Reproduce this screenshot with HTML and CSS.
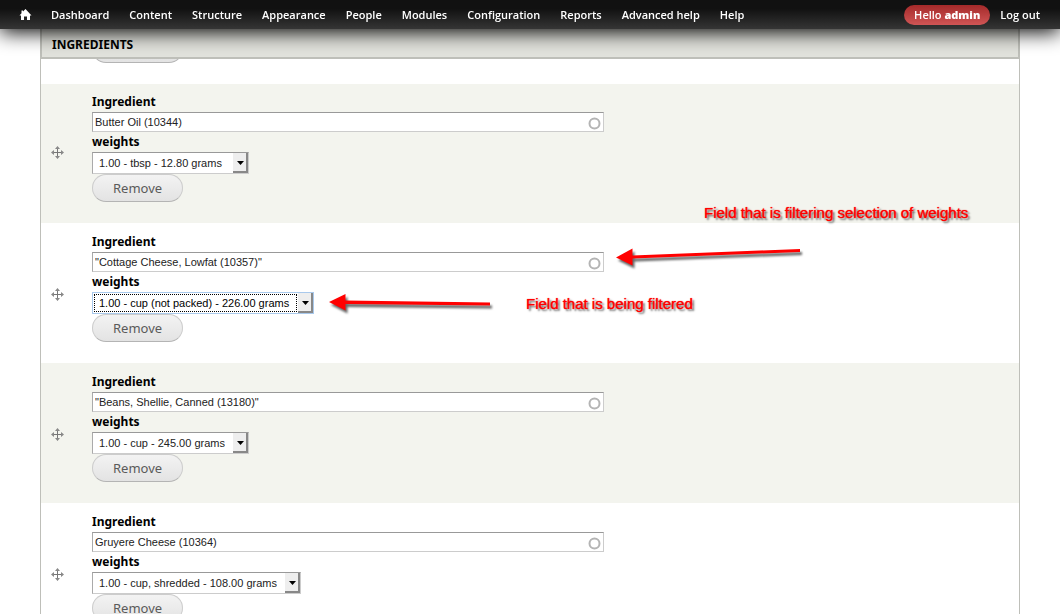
FILE: index.html
```
<!DOCTYPE html>
<html lang="en">
  <head>
    <meta charset="utf-8" />
    <title>Edit recipe</title>
    <link rel="stylesheet" href="styles.css">
  </head>
  <body>
    <nav class="toolbar">
      <a href="#" class="home" aria-label="Home">
        <svg width="13" height="12" viewBox="0 0 13 12"><path d="M6.5 0 12.500 6.400H11V11H8V7.500H5V11H2V6.400H.500L2.500 4.200V1.500H4V2.600z" fill="#fff"/></svg>
      </a>
      <a href="#">Dashboard</a>
      <a href="#">Content</a>
      <a href="#">Structure</a>
      <a href="#">Appearance</a>
      <a href="#">People</a>
      <a href="#">Modules</a>
      <a href="#">Configuration</a>
      <a href="#">Reports</a>
      <a href="#">Advanced help</a>
      <a href="#">Help</a>
      <div class="user">
        <a href="#" class="account">Hello <strong>admin</strong></a>
        <a href="#">Log out</a>
      </div>
    </nav>

    <svg width="0" height="0" class="defs">
      <symbol id="move" viewBox="0 0 13 13">
        <path d="M6.5 1v11M1 6.5h11" stroke="#777" fill="none"/>
        <path d="M4 3 6.500 0 9 3zM4 10l2.500 3L9 10zM3 4 0 6.500 3 9zM10 4l3 2.500L10 9z" fill="#888"/>
      </symbol>
    </svg>

    <main class="panel">
      <div class="panel-head">INGREDIENTS</div>
      <table class="items">
        <tbody>
          <tr class="previous">
            <td class="handle"></td>
            <td><button type="button" class="remove" aria-label="Remove"></button></td>
          </tr>
          <tr class="odd">
            <td class="handle"><svg width="13" height="13"><use href="#move"/></svg></td>
            <td>
              <label for="item-1">Ingredient</label>
              <input type="text" id="item-1" class="autocomplete" value="Butter Oil (10344)">
              <label for="weight-1">weights</label>
              <select id="weight-1"><option>1.00 - tbsp - 12.80 grams</option></select>
              <button type="button" class="remove">Remove</button>
            </td>
          </tr>
          <tr>
            <td class="handle"><svg width="13" height="13"><use href="#move"/></svg></td>
            <td>
              <label for="item-2">Ingredient</label>
              <input type="text" id="item-2" class="autocomplete" value="&quot;Cottage Cheese, Lowfat (10357)&quot;">
              <label for="weight-2">weights</label>
              <div class="focused"><select id="weight-2"><option>1.00 - cup (not packed) - 226.00 grams</option></select></div>
              <button type="button" class="remove">Remove</button>
            </td>
          </tr>
          <tr class="odd">
            <td class="handle"><svg width="13" height="13"><use href="#move"/></svg></td>
            <td>
              <label for="item-3">Ingredient</label>
              <input type="text" id="item-3" class="autocomplete" value="&quot;Beans, Shellie, Canned (13180)&quot;">
              <label for="weight-3">weights</label>
              <select id="weight-3"><option>1.00 - cup - 245.00 grams</option></select>
              <button type="button" class="remove">Remove</button>
            </td>
          </tr>
          <tr>
            <td class="handle"><svg width="13" height="13"><use href="#move"/></svg></td>
            <td>
              <label for="item-4">Ingredient</label>
              <input type="text" id="item-4" class="autocomplete" value="Gruyere Cheese (10364)">
              <label for="weight-4">weights</label>
              <select id="weight-4"><option>1.00 - cup, shredded - 108.00 grams</option></select>
              <button type="button" class="remove">Remove</button>
            </td>
          </tr>
        </tbody>
      </table>
    </main>

    <!-- notes pointing at the two linked fields -->
    <p class="note note-source">Field that is filtering selection of weights</p>
    <svg class="arrow arrow-source" width="190" height="22" viewBox="0 0 190 22">
      <path d="M0 10.5 16.500 1.500V8.500L184 2v3L16.500 11.500V18.500z" fill="#f00"/>
    </svg>
    <p class="note note-target">Field that is being filtered</p>
    <svg class="arrow arrow-target" width="166" height="22" viewBox="0 0 166 22">
      <path d="M0 9 16.500 1V7.500L161 9.500v3L16.500 11V17.500z" fill="#f00"/>
    </svg>
  </body>
</html>
```
FILE: styles.css
```
body {
  margin: 0;
  padding-top: 29px;
  background: #fff;
  color: #000;
  font-family: "Noto Sans", "Lucida Grande", sans-serif;
  font-size: 12px;
  overflow: hidden;
}

/* admin toolbar */
.toolbar {
  position: fixed;
  top: 0;
  left: 0;
  right: 0;
  z-index: 10;
  display: flex;
  align-items: center;
  height: 29px;
  box-sizing: border-box;
  padding: 0 10px;
  background: linear-gradient(#111 30%, #353535);
  box-shadow: 0 3px 20px #000;
  font-family: "Open Sans", "Lucida Grande", sans-serif;
  font-size: 11px;
  font-weight: 600;
}
.toolbar a {
  padding: 0 10px;
  line-height: 20px;
  color: #fff;
  text-decoration: none;
  white-space: nowrap;
}
.toolbar .home {
  padding: 0 9px;
}
.home svg {
  display: block;
}
.user {
  display: flex;
  margin-left: auto;
}
.user .account {
  border-radius: 10px;
  background: linear-gradient(#a52a2a, #d05555);
}

.defs {
  position: absolute;
}

/* ingredients table */
.panel {
  margin: 0 40px;
  border: solid #bebfb9;
  border-width: 0 1px;
}
.panel-head {
  position: relative;
  z-index: 2;
  height: 30px;
  box-sizing: border-box;
  padding: 1px 10px 0;
  border: solid #bebfb9;
  border-width: 0 1px 2px;
  background: #e1e2dc;
  line-height: 30px;
  font-weight: bold;
}
.items {
  width: 100%;
  margin-top: -24px;
  border-collapse: collapse;
}
.items td {
  padding: 9px 0 21px;
  vertical-align: top;
}
.items .previous td {
  padding-top: 0;
}
.items .previous + tr td {
  padding-top: 8px;
}
.items .handle {
  width: 51px;
  padding: 12px 0 10px 10px;
  box-sizing: border-box;
  vertical-align: middle;
}
.handle svg {
  display: block;
}
.odd {
  background: #f3f4ee;
}
.items label {
  display: block;
  line-height: 20px;
  font-weight: bold;
}
.items input,
.items select {
  display: block;
  box-sizing: border-box;
  margin: 0;
  border: 1px solid #ccc;
  border-top-color: #999;
  border-left-color: #aaa;
  border-radius: 0;
  color: #222;
  font: 11px "Liberation Sans", Arial, sans-serif;
}
.items input {
  width: 100%;
  max-width: 512px;
  height: 20px;
  padding: 0 20px 0 2px;
  background: #fff url("data:image/svg+xml,%3Csvg xmlns='http://www.w3.org/2000/svg' width='13' height='13'%3E%3Ccircle cx='6.5' cy='6.5' r='5' fill='none' stroke='%23b4b4b4' stroke-width='2'/%3E%3C/svg%3E") no-repeat right 2px top 4px;
}
.items select {
  appearance: none;
  min-width: 157px;
  height: 22px;
  padding: 0 23px 0 6px;
  background: #fff url("data:image/svg+xml,%3Csvg xmlns='http://www.w3.org/2000/svg' width='15' height='20'%3E%3Cpath d='M0 0h15v20H0z' fill='%23eee'/%3E%3Cpath d='M14 0v19H0' fill='none' stroke='%23888' stroke-width='2'/%3E%3Cpath d='M4 8h7l-3.500 4z' fill='%23000'/%3E%3C/svg%3E") no-repeat right top;
}
.focused {
  position: relative;
  width: fit-content;
}
.items .focused select {
  border-color: #a9c9ec;
  color: #000;
}
.focused::after {
  content: "";
  position: absolute;
  inset: 2px 17px 2px 2px;
  border: 1px dotted #000;
}
.remove {
  display: block;
  min-width: 91px;
  height: 28px;
  padding: 0 20px;
  border: 1px solid #ccc;
  border-bottom-color: #b4b4b4;
  border-radius: 14px;
  background: linear-gradient(#f3f3f3, #e3e3e3);
  color: #5a5a5a;
  font: 13px "Noto Sans", "Lucida Grande", sans-serif;
}

/* notes over the form */
.note {
  position: absolute;
  margin: 0;
  color: #f00;
  font: 15px/18px "Liberation Sans", Arial, sans-serif;
  text-shadow: 0 0 1px #f00, 2px 2px 2px rgba(0, 0, 0, 0.6);
  white-space: nowrap;
}
.note-source {
  top: 204px;
  left: 704px;
}
.note-target {
  top: 295px;
  left: 526px;
}
.arrow {
  position: absolute;
  overflow: visible;
  filter: drop-shadow(2px 3px 1px rgba(0, 0, 0, 0.6));
}
.arrow-source {
  top: 247px;
  left: 616px;
}
.arrow-target {
  top: 293px;
  left: 329px;
}
```
